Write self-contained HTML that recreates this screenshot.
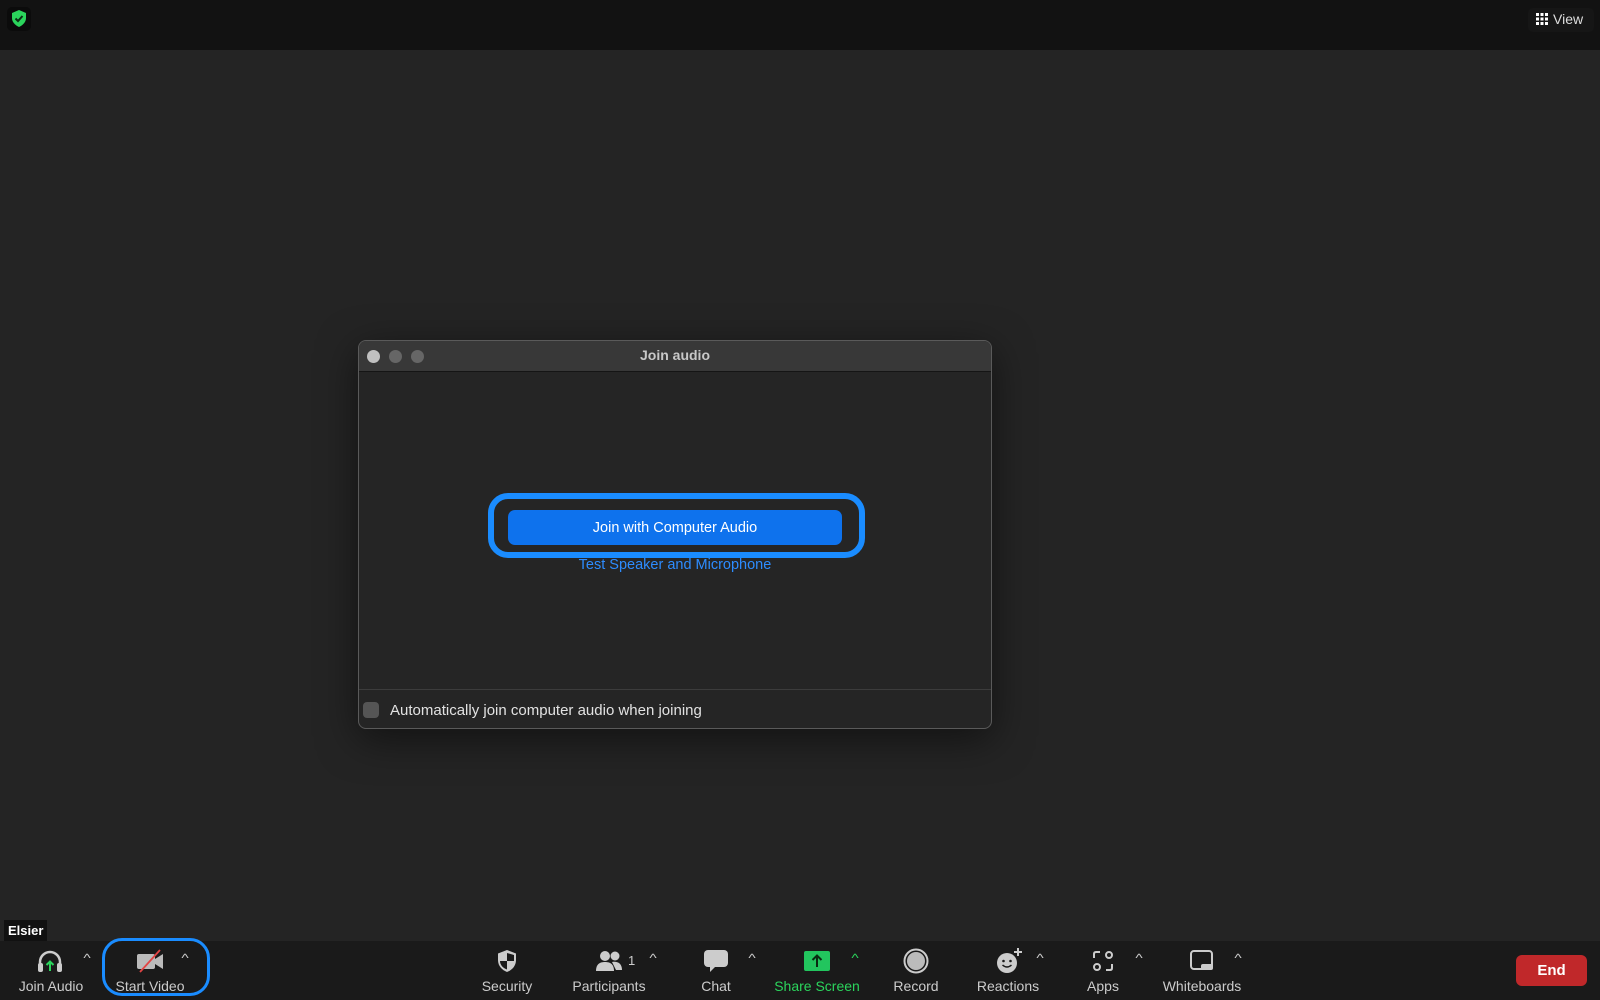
<!DOCTYPE html>
<html><head><meta charset="utf-8"><style>
*{margin:0;padding:0;box-sizing:border-box}
body{width:1600px;height:1000px;background:#242424;font-family:"Liberation Sans",sans-serif;position:relative;overflow:hidden;color:#ddd}
.top{position:absolute;left:0;top:0;width:1600px;height:50px;background:#121212}
.abs{position:absolute}
.tb{position:absolute;left:0;top:941px;width:1600px;height:59px;background:#1a1a1a}
.lbl{position:absolute;top:978px;font-size:14px;color:#ccc;transform:translateX(-50%);white-space:nowrap}
.car{position:absolute;top:951px;font-size:12px;color:#ccc;transform:translateX(-50%) scaleX(1.3)}
.ic{position:absolute;transform:translate(-50%,-50%);top:961px}
</style></head><body>
<div class="top"></div>
<div class="abs" style="left:7px;top:7px;width:24px;height:24px;background:#0b0b0b;border-radius:5px"></div>
<svg class="abs" style="left:10px;top:9px" width="18" height="19" viewBox="0 0 18 19"><path d="M9 1 L16 4 V9 C16 13 13 16 9 18 C5 16 2 13 2 9 V4 Z" fill="#2bd45c"/><path d="M5.5 9.5 L8 12 L12.5 7" stroke="#0b2d15" stroke-width="2" fill="none"/></svg>
<div class="abs" style="left:1528px;top:8px;width:66px;height:24px;background:#161616;border-radius:5px"></div>
<svg class="abs" style="left:1536px;top:13px" width="12" height="12"><g fill="#fff"><rect x="0" y="0" width="3" height="3"/><rect x="4.5" y="0" width="3" height="3"/><rect x="9" y="0" width="3" height="3"/><rect x="0" y="4.5" width="3" height="3"/><rect x="4.5" y="4.5" width="3" height="3"/><rect x="9" y="4.5" width="3" height="3"/><rect x="0" y="9" width="3" height="3"/><rect x="4.5" y="9" width="3" height="3"/><rect x="9" y="9" width="3" height="3"/></g></svg>
<div class="abs" style="left:1553px;top:11px;font-size:14px;color:#ddd">View</div>

<div class="abs" style="left:358px;top:340px;width:634px;height:389px;background:#252525;border:1px solid #5a5a5a;border-radius:8px;box-shadow:0 10px 40px rgba(0,0,0,.5);overflow:hidden">
 <div style="height:31px;background:#383838;border-bottom:1px solid #151515;position:relative">
  <div class="abs" style="left:8px;top:9px;width:13px;height:13px;border-radius:50%;background:#c0c0c0"></div>
  <div class="abs" style="left:30px;top:9px;width:13px;height:13px;border-radius:50%;background:#666"></div>
  <div class="abs" style="left:52px;top:9px;width:13px;height:13px;border-radius:50%;background:#666"></div>
  <div style="text-align:center;line-height:29px;font-size:14px;font-weight:bold;color:#c8c8c8">Join audio</div>
 </div>
 <div class="abs" style="left:0;top:348px;width:634px;height:1px;background:#3c3c3c"></div>
 <div class="abs" style="left:4px;top:361px;width:16px;height:16px;border-radius:4px;background:#555"></div>
 <div class="abs" style="left:31px;top:361px;font-size:15px;color:#e2e2e2">Automatically join computer audio when joining</div>
</div>
<div class="abs" style="left:488px;top:493px;width:377px;height:65px;border:6px solid #1a8cff;border-radius:20px"></div>
<div class="abs" style="left:508px;top:510px;width:334px;height:35px;background:#0e72ed;border-radius:7px;color:#fff;font-size:14.5px;text-align:center;line-height:36px">Join with Computer Audio</div>
<div class="abs" style="left:570px;top:557px;width:210px;text-align:center;font-size:14.5px;color:#2d8cff">Test Speaker and Microphone</div>

<div class="abs" style="left:4px;top:920px;height:21px;padding:0 4px;background:#111;font-size:13px;font-weight:bold;color:#fff;line-height:21px">Elsier</div>
<div class="tb"></div>
<div class="abs" style="left:102px;top:938px;width:108px;height:58px;border:3px solid #1a8cff;border-radius:20px"></div>

<svg class="ic" style="left:50px" width="28" height="24" viewBox="0 0 28 24"><path d="M4 18 V13 A10 10 0 0 1 24 13 V18" stroke="#ccc" stroke-width="2.5" fill="none"/><rect x="2" y="14" width="5" height="9" rx="2" fill="#ccc"/><rect x="21" y="14" width="5" height="9" rx="2" fill="#ccc"/><path d="M14 22 V13 M10.5 16 L14 12.5 L17.5 16" stroke="#2bd45c" stroke-width="2" fill="none"/></svg>
<div class="lbl" style="left:51px">Join Audio</div><div class="car" style="left:87px">^</div>

<svg class="ic" style="left:150px" width="30" height="24" viewBox="0 0 30 24"><rect x="2" y="5" width="18" height="15" rx="2" fill="#bbb"/><path d="M20 10 L28 5 V20 L20 15Z" fill="#bbb"/><path d="M5 23 L25 1" stroke="#e24444" stroke-width="1.8"/></svg>
<div class="lbl" style="left:150px">Start Video</div><div class="car" style="left:185px">^</div>

<svg class="ic" style="left:507px" width="22" height="24" viewBox="0 0 22 24"><path d="M11 1 L20 4.5 V11 C20 17 16 21 11 23 C6 21 2 17 2 11 V4.5Z" fill="#ccc"/><path d="M11 4 V12 H4 C4 16 7 19 11 20.5 V12 H18 V6 Z" fill="#1a1a1a"/></svg>
<div class="lbl" style="left:507px">Security</div>

<svg class="ic" style="left:609px" width="28" height="22" viewBox="0 0 28 22"><circle cx="10" cy="6" r="5" fill="#ccc"/><path d="M1 21 C1 14 5 12 10 12 C15 12 19 14 19 21Z" fill="#ccc"/><circle cx="20" cy="6" r="4.5" fill="#ccc"/><path d="M17 12 C22 11 27 13 27 20 H21" fill="#ccc"/></svg>
<div class="abs" style="left:628px;top:953px;font-size:13px;color:#ccc">1</div>
<div class="lbl" style="left:609px">Participants</div><div class="car" style="left:653px">^</div>

<svg class="ic" style="left:716px" width="26" height="26" viewBox="0 0 26 26"><rect x="1" y="2" width="24" height="17" rx="4" fill="#ccc"/><path d="M7 18 L7 24 L13 18Z" fill="#ccc"/></svg>
<div class="lbl" style="left:716px">Chat</div><div class="car" style="left:752px">^</div>

<svg class="ic" style="left:817px" width="28" height="22" viewBox="0 0 28 22"><rect x="1" y="1" width="26" height="20" rx="2" fill="#22c55e"/><path d="M14 17 V6 M9.5 10 L14 5.5 L18.5 10" stroke="#0a2a12" stroke-width="2" fill="none"/></svg>
<div class="lbl" style="left:817px;color:#2bd45c">Share Screen</div><div class="car" style="left:855px;color:#2bd45c">^</div>

<svg class="ic" style="left:916px" width="26" height="26" viewBox="0 0 26 26"><circle cx="13" cy="13" r="11.5" fill="none" stroke="#ccc" stroke-width="2"/><circle cx="13" cy="13" r="9" fill="#bbb"/></svg>
<div class="lbl" style="left:916px">Record</div>

<svg class="ic" style="left:1010px" width="30" height="28" viewBox="0 0 30 28"><circle cx="12" cy="16" r="10" fill="#ccc"/><circle cx="8.5" cy="14" r="1.3" fill="#1a1a1a"/><circle cx="15.5" cy="14" r="1.3" fill="#1a1a1a"/><path d="M7.5 18 Q12 22 16.5 18" stroke="#1a1a1a" stroke-width="1.5" fill="none"/><path d="M23 1 V9 M19 5 H27" stroke="#ccc" stroke-width="2"/></svg>
<div class="lbl" style="left:1008px">Reactions</div><div class="car" style="left:1040px">^</div>

<svg class="ic" style="left:1103px" width="24" height="24" viewBox="0 0 24 24"><path d="M9 3 H5 Q3 3 3 5 V9 M21 15 V19 Q21 21 19 21 H15" stroke="#ccc" stroke-width="2" fill="none"/><circle cx="18" cy="6" r="3" stroke="#ccc" stroke-width="2" fill="none"/><circle cx="6" cy="18" r="3" stroke="#ccc" stroke-width="2" fill="none"/></svg>
<div class="lbl" style="left:1103px">Apps</div><div class="car" style="left:1139px">^</div>

<svg class="ic" style="left:1202px" width="26" height="24" viewBox="0 0 26 24"><rect x="2" y="2" width="21" height="18" rx="3" stroke="#ccc" stroke-width="2" fill="none"/><rect x="12" y="15" width="12" height="6" rx="2" fill="#ccc"/></svg>
<div class="lbl" style="left:1202px">Whiteboards</div><div class="car" style="left:1238px">^</div>

<div class="abs" style="left:1516px;top:955px;width:71px;height:31px;background:#c0282a;border-radius:6px;color:#fff;font-weight:bold;font-size:15px;text-align:center;line-height:31px">End</div>
</body></html>
